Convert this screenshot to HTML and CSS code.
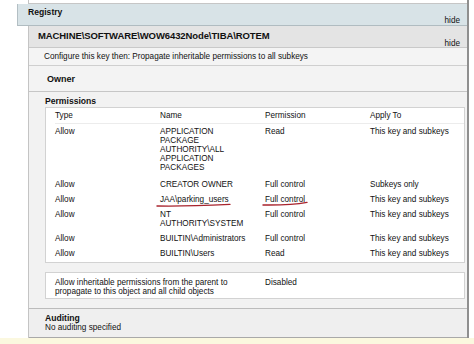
FILE: index.html
```html
<!DOCTYPE html>
<html>
<head>
<meta charset="utf-8">
<link rel="stylesheet" href="styles.css">
</head>
<body>
<div class="page">
  <div class="frame">
    <div class="topstrip"></div>
    <div class="registry">
      <div class="reg-title">Registry</div>
      <div class="hide">hide</div>
    </div>
    <div class="keyrow">
      <div class="key-title">MACHINE\SOFTWARE\WOW6432Node\TIBA\ROTEM</div>
      <div class="hide hide-key">hide</div>
    </div>
    <div class="config">Configure this key then: Propagate inheritable permissions to all subkeys</div>
    <div class="owner">Owner</div>
    <div class="perms">
      <div class="perms-title">Permissions</div>
      <div class="tbox">
        <div class="trow thead">
          <div>Type</div><div>Name</div><div>Permission</div><div>Apply To</div>
        </div>
        <div class="trow tall">
          <div>Allow</div><div>APPLICATION<br>PACKAGE<br>AUTHORITY\ALL<br>APPLICATION<br>PACKAGES</div><div>Read</div><div>This key and subkeys</div>
        </div>
        <div class="trow">
          <div>Allow</div><div>CREATOR OWNER</div><div>Full control</div><div>Subkeys only</div>
        </div>
        <div class="trow">
          <div>Allow</div><div>JAA\parking_users</div><div>Full control</div><div>This key and subkeys</div>
        </div>
        <div class="trow">
          <div>Allow</div><div>NT<br>AUTHORITY\SYSTEM</div><div>Full control</div><div>This key and subkeys</div>
        </div>
        <div class="trow">
          <div>Allow</div><div>BUILTIN\Administrators</div><div>Full control</div><div>This key and subkeys</div>
        </div>
        <div class="trow">
          <div>Allow</div><div>BUILTIN\Users</div><div>Read</div><div>This key and subkeys</div>
        </div>
      </div>
      <div class="ibox">
        <div class="ibox-text">Allow inheritable permissions from the parent to<br>propagate to this object and all child objects</div>
        <div>Disabled</div>
      </div>
    </div>
    <div class="audit">
      <div class="audit-title">Auditing</div>
      <div>No auditing specified</div>
    </div>
  </div>
  <div class="footer"></div>
  <svg class="marks" width="474" height="344" viewBox="0 0 474 344">
    <path d="M157 206 C175 206.4 200 205.8 230 204.4" fill="none" stroke="#a8232c" stroke-width="1.4" stroke-linecap="round"/>
    <path d="M263 205 C278 205.2 294 204.8 307 202.4" fill="none" stroke="#a8232c" stroke-width="1.4" stroke-linecap="round"/>
  </svg>
</div>
</body>
</html>
```
FILE: styles.css
```css
* { box-sizing: border-box; }
html, body { margin: 0; padding: 0; }
body {
  width: 474px;
  height: 344px;
  overflow: hidden;
  background: #ffffff;
  font-family: "Liberation Sans", Arial, sans-serif;
  font-size: 8.2px;
  color: #111111;
}
.page {
  position: relative;
  width: 474px;
  height: 344px;
  display: flex;
  flex-direction: column;
}
.frame {
  margin-left: 28px;
  width: 441px;
  border-left: 1px solid #c4c4c4;
  border-right: 2px solid #8f8f8f;
  background: #f3f3f3;
}
.topstrip {
  height: 4px;
  background: #ffffff;
  border-bottom: 1px solid #c6c6c6;
}
.registry {
  margin-left: -12px;
  height: 22px;
  padding: 3px 7px 0 10px;
  background: #d8e3e7;
  border-left: 1px solid #b3bfc4;
  border-bottom: 1px solid #b0bcc1;
}
.reg-title {
  font-weight: bold;
  font-size: 8.6px;
  line-height: 10px;
}
.hide {
  text-align: right;
  line-height: 8px;
  font-size: 8.2px;
}
.keyrow {
  height: 22px;
  padding: 4px 7px 0 9px;
  background: #e4e4e4;
  border-bottom: 1px solid #c9c9c9;
}
.key-title {
  font-weight: bold;
  font-size: 9.5px;
  line-height: 11px;
  letter-spacing: -0.1px;
}
.hide-key { line-height: 6px; }
.config {
  height: 18px;
  padding: 4px 0 0 15px;
  line-height: 10px;
  background: #f4f4f4;
  border-bottom: 1px solid #cfcfcf;
}
.owner {
  height: 26px;
  padding: 8px 0 0 18px;
  line-height: 10px;
  font-weight: bold;
  font-size: 9px;
  background: #f3f3f3;
  border-bottom: 1px solid #c6c6c6;
}
.perms {
  height: 217px;
  padding: 4px 2px 0 16px;
  background: #f2f2f2;
  border-bottom: 1px solid #bcbcbc;
}
.perms-title {
  font-weight: bold;
  font-size: 8.6px;
  line-height: 10px;
  margin-bottom: 1px;
}
.tbox {
  background: #ffffff;
  border: 1px solid #d2d2d2;
  padding: 0 0 1px 9px;
}
.trow {
  display: grid;
  grid-template-columns: 105px 105px 105px 1fr;
  line-height: 9px;
  padding: 3px 0;
}
.thead {
  border-bottom: 1px solid #ececec;
}
.tall { padding-bottom: 5px; }
.ibox {
  margin-top: 9px;
  background: #ffffff;
  border: 1px solid #d2d2d2;
  height: 27px;
  padding: 5px 0 0 9px;
  display: grid;
  grid-template-columns: 210px 1fr;
  line-height: 9px;
}
.audit {
  height: 29px;
  padding: 4px 0 0 16px;
  line-height: 10px;
  background: #efefef;
  border-bottom: 1px solid #a9a9a9;
}
.audit-title {
  font-weight: bold;
  font-size: 8.6px;
}
.footer {
  flex: 1;
  background: #fbf8df;
}
.marks {
  position: absolute;
  left: 0;
  top: 0;
  pointer-events: none;
}
```
